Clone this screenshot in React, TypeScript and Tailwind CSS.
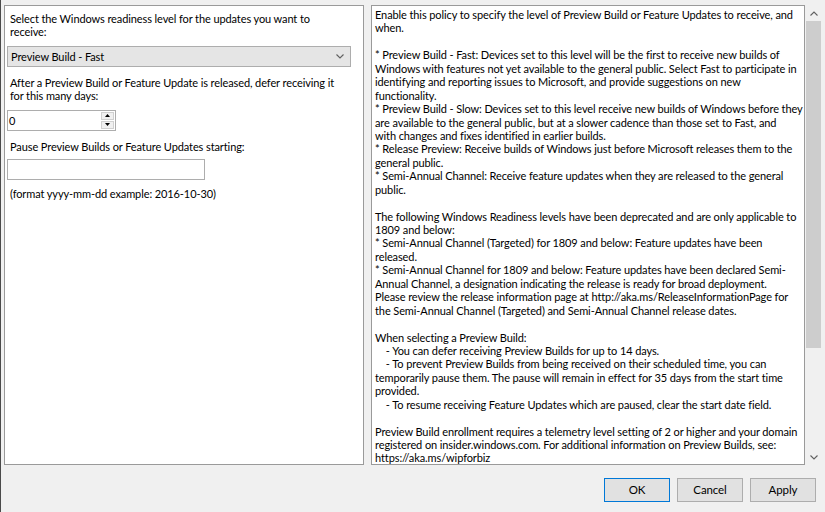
const font = { fontFamily: '"Segoe UI", Lato, "Liberation Sans", sans-serif' };

const helpLines: string[] = [
  "Enable this policy to specify the level of Preview Build or Feature Updates to receive, and",
  "when.",
  "",
  "* Preview Build - Fast: Devices set to this level will be the first to receive new builds of",
  "Windows with features not yet available to the general public. Select Fast to participate in",
  "identifying and reporting issues to Microsoft, and provide suggestions on new",
  "functionality.",
  "* Preview Build - Slow: Devices set to this level receive new builds of Windows before they",
  "are available to the general public, but at a slower cadence than those set to Fast, and",
  "with changes and fixes identified in earlier builds.",
  "* Release Preview: Receive builds of Windows just before Microsoft releases them to the",
  "general public.",
  "* Semi-Annual Channel: Receive feature updates when they are released to the general",
  "public.",
  "",
  "The following Windows Readiness levels have been deprecated and are only applicable to",
  "1809 and below:",
  "* Semi-Annual Channel (Targeted) for 1809 and below: Feature updates have been",
  "released.",
  "* Semi-Annual Channel for 1809 and below: Feature updates have been declared Semi-",
  "Annual Channel, a designation indicating the release is ready for broad deployment.",
  "Please review the release information page at http://aka.ms/ReleaseInformationPage for",
  "the Semi-Annual Channel (Targeted) and Semi-Annual Channel release dates.",
  "",
  "When selecting a Preview Build:",
  "    - You can defer receiving Preview Builds for up to 14 days.",
  "    - To prevent Preview Builds from being received on their scheduled time, you can",
  "temporarily pause them. The pause will remain in effect for 35 days from the start time",
  "provided.",
  "    - To resume receiving Feature Updates which are paused, clear the start date field.",
  "",
  "Preview Build enrollment requires a telemetry level setting of 2 or higher and your domain",
  "registered on insider.windows.com. For additional information on Preview Builds, see:",
  "https://aka.ms/wipforbiz",
];

function Chevron({ up }: { up?: boolean }) {
  return (
    <svg width="8" height="5" viewBox="0 0 8 5" className="block">
      <path
        d={up ? "M0.5 4.5 L4 1 L7.5 4.5" : "M0.5 0.5 L4 4 L7.5 0.5"}
        fill="none"
        stroke="#606060"
        strokeWidth="1.1"
      />
    </svg>
  );
}

function Button({ label, primary }: { label: string; primary?: boolean }) {
  return (
    <button
      className={
        primary
          ? "h-[24px] w-[66px] border border-[#0078d7] bg-[#e1e1e1] text-[11.5px] text-black"
          : "h-[24px] w-[66px] border border-[#adadad] bg-[#e1e1e1] text-[11.5px] text-black"
      }
    >
      {label}
    </button>
  );
}

export default function App() {
  return (
    <div
      style={font}
      className="flex h-[512px] w-[825px] flex-col overflow-hidden border-l border-[#4a4a4a] bg-[#f0f0f0] text-[11px] leading-[13.45px] tracking-[-0.1px] text-black"
    >
      <div className="flex pl-[3px] pt-[5px]">
        {/* options pane */}
        <div className="flex h-[460px] w-[360px] flex-col border border-[#9a9a9a] bg-white px-[2px] pt-[6px]">
          <div className="pl-[3px]">
            <div>Select the Windows readiness level for the updates you want to</div>
            <div>receive:</div>
          </div>
          <div className="mt-[7px] flex h-[21px] w-[344px] items-center justify-between border border-[#adadad] bg-[#e5e5e5] pl-[3px] pr-[6px]">
            <span>Preview Build - Fast</span>
            <Chevron />
          </div>
          <div className="mt-[9px] pl-[3px]">
            <div>After a Preview Build or Feature Update is released, defer receiving it</div>
            <div>for this many days:</div>
          </div>
          <div className="mt-[7px] flex h-[21px] w-[109px] items-center justify-between border border-[#adadad] bg-white pl-[1px] pr-[1px]">
            <span>0</span>
            <div className="flex h-[17px] w-[13px] flex-col gap-[1px]">
              <div className="flex flex-1 items-center justify-center border border-[#d0d0d0] bg-[#f0f0f0]">
                <svg width="5" height="3" viewBox="0 0 5 3">
                  <path d="M0 3 L2.5 0 L5 3 Z" fill="#000" />
                </svg>
              </div>
              <div className="flex flex-1 items-center justify-center border border-[#d0d0d0] bg-[#f0f0f0]">
                <svg width="5" height="3" viewBox="0 0 5 3">
                  <path d="M0 0 L2.5 3 L5 0 Z" fill="#000" />
                </svg>
              </div>
            </div>
          </div>
          <div className="mt-[9px] pl-[3px]">Pause Preview Builds or Feature Updates starting:</div>
          <div className="mt-[6px] h-[21px] w-[198px] border border-[#adadad] bg-white" />
          <div className="mt-[7px] pl-[3px]">(format yyyy-mm-dd example: 2016-10-30)</div>
        </div>

        {/* help pane */}
        <div className="ml-[7px] flex h-[460px]">
          <div className="w-[434px] border border-[#9a9a9a] bg-white pl-[3px] pt-[2px]">
            {helpLines.map((line, i) => (
              <div key={i} className="h-[13.45px] whitespace-pre">
                {line}
              </div>
            ))}
          </div>
          <div className="flex w-[17px] flex-col items-center">
            <div className="flex h-[16px] items-center justify-center">
              <Chevron up />
            </div>
            <div className="h-[327px] w-[15px] bg-[#cdcdcd]" />
            <div className="flex-1" />
            <div className="flex h-[16px] items-center justify-center">
              <Chevron />
            </div>
          </div>
        </div>
      </div>

      <div className="mt-[13px] flex justify-end gap-[7px] pr-[9px]">
        <Button label="OK" primary />
        <Button label="Cancel" />
        <Button label="Apply" />
      </div>
    </div>
  );
}
